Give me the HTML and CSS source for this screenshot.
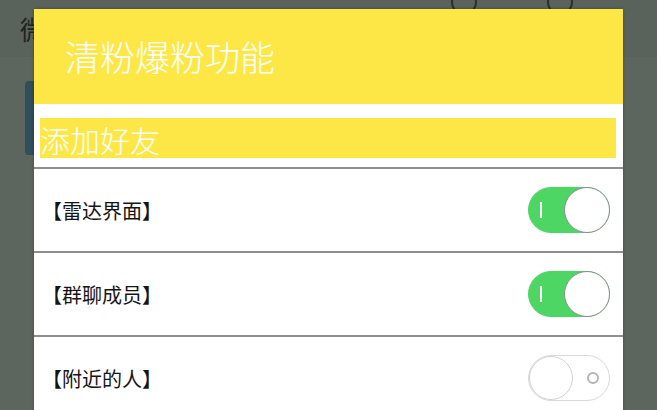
FILE: index.html
```html
<!DOCTYPE html>
<html>
    <head>
        <title>清粉爆粉功能</title>
        <link rel="stylesheet" href="styles.css">
    </head>
    <body>
        <div class="screen">
            <div class="app_bar">
                <span class="app_title">微</span>
                <span class="app_icon one"></span>
                <span class="app_icon two"></span>
            </div>
            <div class="app_body">
                <div class="app_card"></div>
            </div>
        </div>

        <div class="dialog">
            <div class="dialog_head">清粉爆粉功能</div>
            <div class="section">添加好友</div>

            <div class="row">
                <span class="label">【雷达界面】</span>
                <label class="switch">
                    <input type="checkbox" class="switch_box" checked>
                    <span class="switch_track"></span>
                </label>
            </div>
            <div class="row">
                <span class="label">【群聊成员】</span>
                <label class="switch">
                    <input type="checkbox" class="switch_box" checked>
                    <span class="switch_track"></span>
                </label>
            </div>
            <div class="row">
                <span class="label">【附近的人】</span>
                <label class="switch">
                    <input type="checkbox" class="switch_box">
                    <span class="switch_track"></span>
                </label>
            </div>
        </div>
    </body>
</html>
```

FILE: styles.css
```css
html, body {
    margin: 0;
    padding: 0;
}
body {
    width: 657px;
    height: 410px;
    overflow: hidden;
    position: relative;
    background: #5d665e;
    font-family: "Noto Sans CJK SC", "Noto Sans", sans-serif;
}

/* dimmed page behind the dialog */
.screen {
    display: flex;
    flex-direction: column;
    height: 100%;
}
.app_bar {
    height: 56px;
    display: flex;
    align-items: center;
    padding-left: 20px;
    background: #5a635b;
    border-bottom: 1px solid #58615a;
}
.app_title {
    font-size: 26px;
    color: #1e241f;
}
.app_icon {
    width: 22px;
    height: 22px;
    border: 2px solid #2a302b;
    border-radius: 50%;
    margin-top: -52px;
}
.app_icon.one {
    margin-left: 405px;
}
.app_icon.two {
    margin-left: 70px;
}
.app_body {
    flex: 1;
    padding: 24px 0 0 25px;
}
.app_card {
    width: 12px;
    height: 74px;
    background: #2f4f5a;
    border-radius: 4px 0 0 4px;
}

/* dialog */
.dialog {
    position: absolute;
    left: 34px;
    top: 9px;
    width: 589px;
    height: 420px;
    background: #ffffff;
    box-shadow: 0 0 3px rgba(0, 0, 0, 0.3);
}
.dialog_head {
    height: 95px;
    box-sizing: border-box;
    padding: 22px 0 0 31px;
    background: #fde747;
    color: #ffffff;
    font-size: 35px;
    font-weight: 300;
    line-height: 50px;
}
.section {
    margin: 14px 7px 9px 6px;
    height: 40px;
    background: #fde747;
    color: #ffffff;
    font-size: 30px;
    font-weight: 300;
    line-height: 42px;
}
.row {
    height: 82px;
    display: flex;
    align-items: center;
    justify-content: space-between;
    border-top: 2px solid #8e8e8e;
    padding: 0 13px 0 8px;
}
.label {
    font-size: 20px;
    color: #151515;
}

/* switch */
.switch {
    position: relative;
    width: 82px;
    height: 46px;
    display: block;
}
.switch_box {
    position: absolute;
    opacity: 0;
    pointer-events: none;
}
.switch_track {
    display: block;
    box-sizing: border-box;
    width: 82px;
    height: 46px;
    border-radius: 23px;
    border: 1px solid #d9d9d9;
    background: #ffffff;
    position: relative;
}
.switch_track:before {
    content: "";
    position: absolute;
    box-sizing: border-box;
    right: 10px;
    top: 16px;
    width: 12px;
    height: 12px;
    border: 2px solid #b5b5b5;
    border-radius: 50%;
}
.switch_track:after {
    content: "";
    position: absolute;
    box-sizing: border-box;
    left: 0;
    top: 0;
    width: 44px;
    height: 44px;
    border-radius: 50%;
    background: #ffffff;
    border: 1px solid #d2d2d2;
}
.switch_box:checked + .switch_track {
    background: #4ed665;
    border-color: #4ed665;
}
.switch_box:checked + .switch_track:before {
    left: 11px;
    right: auto;
    top: 14px;
    width: 2px;
    height: 16px;
    border: none;
    border-radius: 0;
    background: #ffffff;
}
.switch_box:checked + .switch_track:after {
    left: auto;
    right: -1px;
    top: -1px;
    width: 46px;
    height: 46px;
    border: 1px solid #8a8f8a;
}
```
